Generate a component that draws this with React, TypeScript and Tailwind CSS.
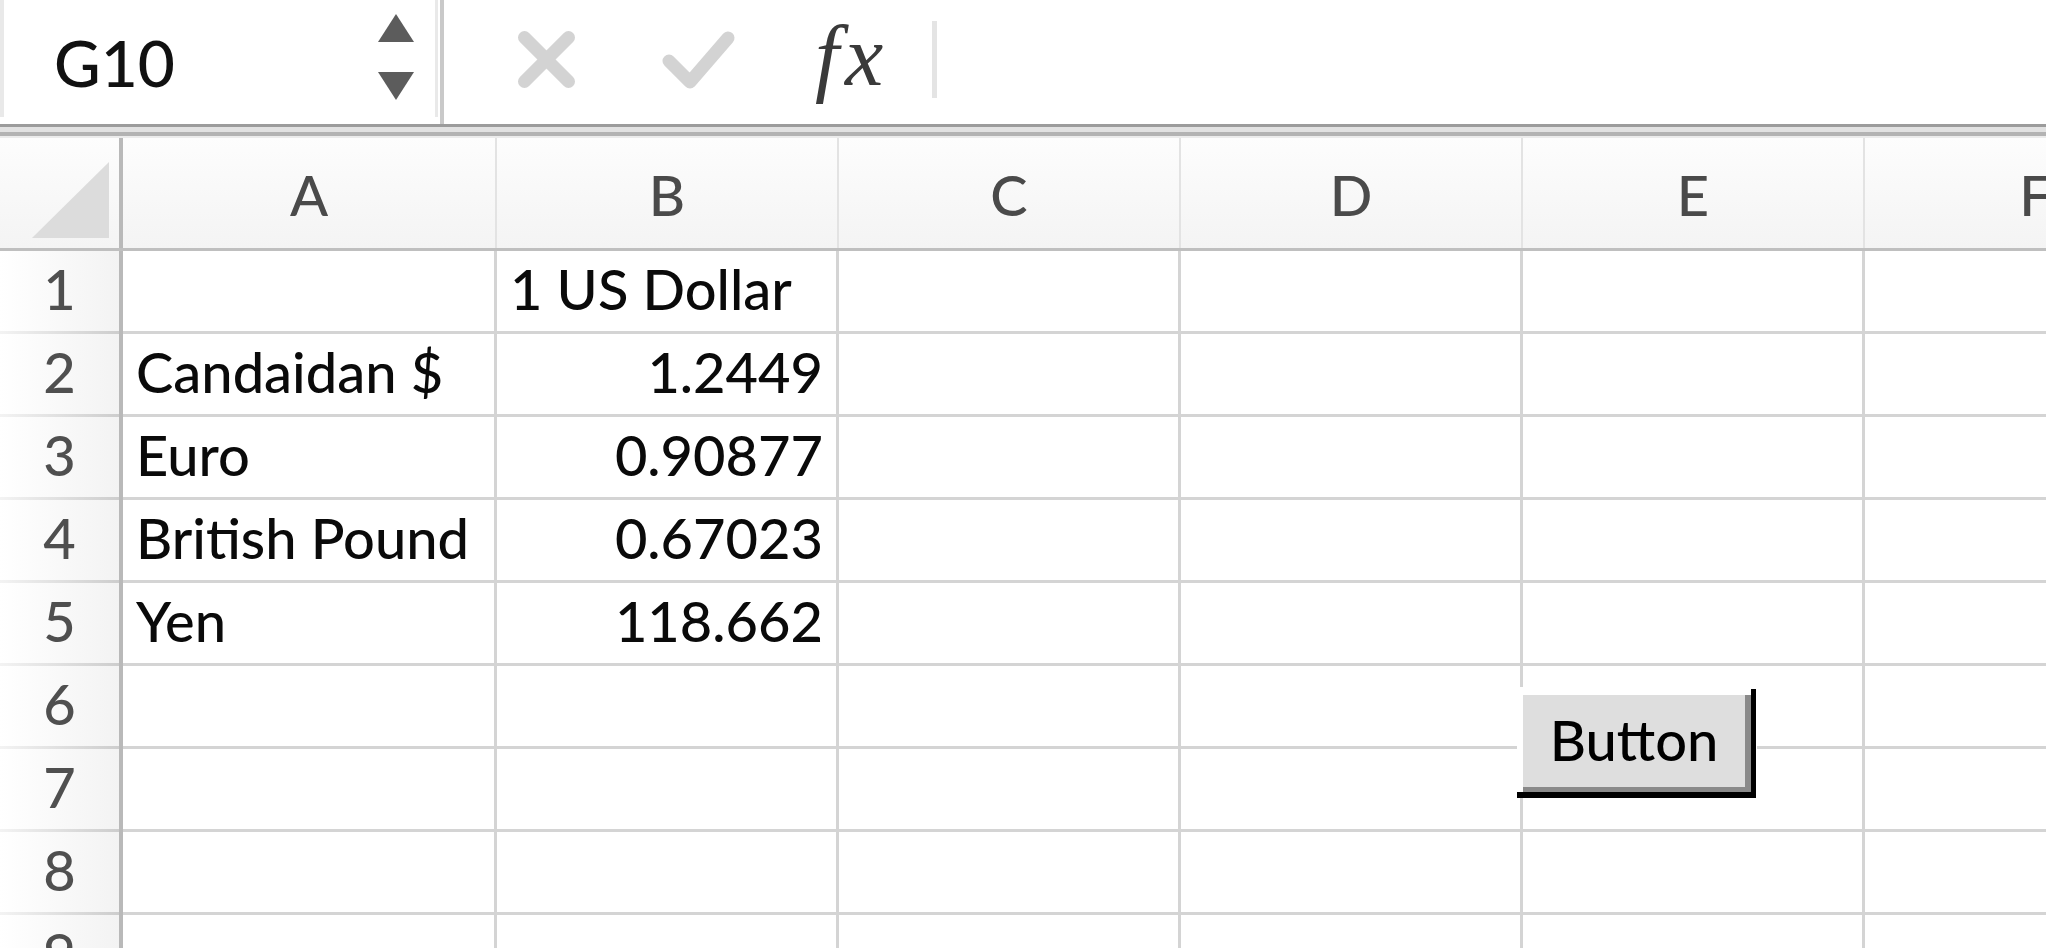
import React from 'react'

const columns = [
  { id: 'A', width: 'w-[374px]' },
  { id: 'B', width: 'w-[342px]' },
  { id: 'C', width: 'w-[342px]' },
  { id: 'D', width: 'w-[342px]' },
  { id: 'E', width: 'w-[342px]' },
  { id: 'F', width: 'w-[342px]' },
]

type Cell = { value: string, numeric?: boolean }

const rows: Cell[][] = [
  [{ value: '' }, { value: '1 US Dollar' }],
  [{ value: 'Candaidan $' }, { value: '1.2449', numeric: true }],
  [{ value: 'Euro' }, { value: '0.90877', numeric: true }],
  [{ value: 'British Pound' }, { value: '0.67023', numeric: true }],
  [{ value: 'Yen' }, { value: '118.662', numeric: true }],
  [], [], [], [],
]

const FormulaBar = () => {
  return <div className='flex flex-col'>
    <div className='flex h-[124px] items-start bg-white'>
      {/* name box */}
      <div className='flex h-[117px] w-[438px] items-center justify-between border-l-4 border-r-[3px] border-[#e9e9e9] pl-[50px] pr-[21px]'>
        <span className='pt-[9px] text-[64px] font-medium leading-none text-[#111]'>G10</span>
        <svg width='36' height='117' viewBox='0 0 36 117'>
          <polygon points='0,42 36,42 18,14' fill='#5c5c5c' />
          <polygon points='0,72 36,72 18,100' fill='#5c5c5c' />
        </svg>
      </div>
      <div className='ml-[2px] h-[124px] w-[4px] bg-[#c9c9c9]' />

      <svg className='ml-[66px]' width='72' height='124' viewBox='0 0 72 124'>
        <g stroke='#d3d3d3' strokeWidth='13' strokeLinecap='round'>
          <line x1='14.5' y1='37.5' x2='58.5' y2='81.5' />
          <line x1='58.5' y1='37.5' x2='14.5' y2='81.5' />
        </g>
      </svg>
      <svg className='ml-[73px]' width='90' height='124' viewBox='0 0 90 124'>
        <polyline points='14,61 35,82 73,38' fill='none' stroke='#d3d3d3' strokeWidth='13' strokeLinecap='round' strokeLinejoin='round' />
      </svg>
      <span className='ml-[70px] h-[124px] w-[117px] font-["Liberation_Serif",serif] text-[86px] italic leading-[112px] tracking-[6px] text-[#3a3a3a]'>fx</span>
      <div className='mt-[21px] h-[77px] w-[5px] bg-[#e4e4e4]' />
    </div>
    <div className='h-[3px] bg-[#9c9c9c]' />
    <div className='h-[5px] bg-[#e2e2e2]' />
    <div className='h-[4px] bg-[#b3b3b3]' />
    <div className='h-[2px] bg-[#ececec]' />
  </div>
}

const HeaderRow = () => {
  return <div className='flex h-[113px] border-b-[3px] border-[#bfbfbf] bg-linear-to-b from-[#fdfdfd] to-[#f4f4f4]'>
    <div className='relative w-[123px] shrink-0 border-r-4 border-[#b9b9b9]'>
      <svg className='absolute left-[32px] top-[24px]' width='77' height='76' viewBox='0 0 77 76'>
        <polygon points='77,0 77,76 0,76' fill='#dcdcdc' />
      </svg>
    </div>
    {columns.map(({ id, width }) => (
      <div key={id} className={`${width} flex shrink-0 items-center justify-center border-r-2 border-[#e3e3e3] pt-1 text-[56px] font-medium leading-none text-[#4a4a4a]`}>
        {id}
      </div>
    ))}
  </div>
}

const SheetButton = () => {
  return <div className='absolute left-[1517px] top-[687px] bg-white pr-[1px] pt-[2px]'>
    <div className='border-b-[6px] border-r-[5px] border-black pl-[6px] pt-[6px]'>
      <div className='flex h-[97px] w-[228px] items-center justify-center border-b-[5px] border-r-[6px] border-[#8a8a8a] bg-[#dedede] pb-[2px] text-[56px] font-medium leading-none text-black'>
        Button
      </div>
    </div>
  </div>
}

export default function App() {
  return <div className='relative h-[948px] w-[2046px] overflow-hidden bg-white font-[Lato,sans-serif]'>
    <FormulaBar />
    <HeaderRow />
    <div className='flex flex-col'>
      {rows.map((row, r) => (
        <div key={r} className='flex h-[83px] shrink-0'>
          <div className='flex w-[123px] shrink-0 flex-col border-r-4 border-[#b9b9b9] bg-linear-to-r from-white to-[#f3f3f3]'>
            <div className='flex flex-1 items-center justify-center pb-[5px] text-[56px] font-medium leading-none text-[#4f4f4f]'>
              {r + 1}
            </div>
            <div className='h-[3px] bg-linear-to-r from-[#f3f3f3] to-[#cdcdcd]' />
          </div>
          {columns.map(({ id, width }, c) => {
            const cell = row[c]
            return <div key={id} className={`${width} flex shrink-0 items-center overflow-hidden whitespace-nowrap border-b-[3px] border-r-[3px] border-[#d4d4d4] px-[13px] pb-[5px] text-[56px] font-medium leading-none text-[#0a0a0a] ${cell?.numeric ? 'justify-end' : 'justify-start'}`}>
              {cell?.value}
            </div>
          })}
        </div>
      ))}
    </div>
    <SheetButton />
  </div>
}
